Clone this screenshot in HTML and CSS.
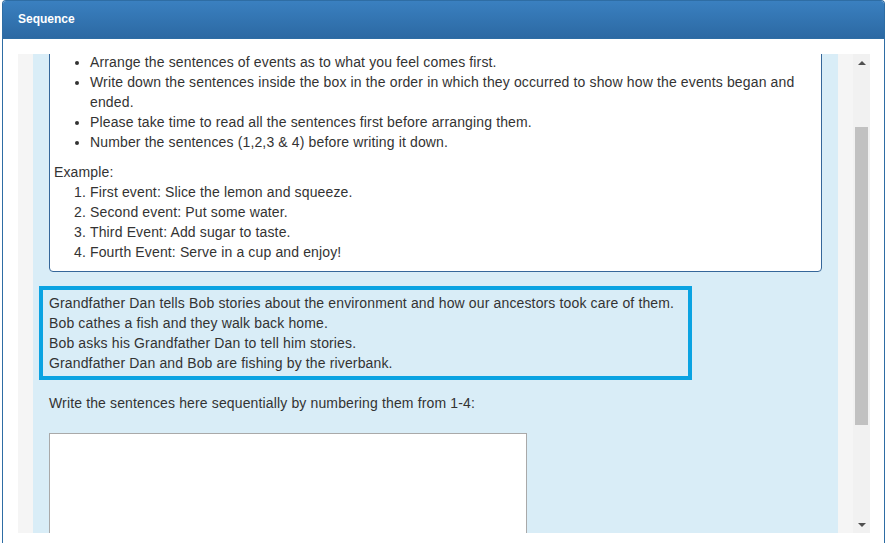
FILE: index.html
```html
<!DOCTYPE html>
<html>
<head>
    <title>Sequence</title>
    <link rel="stylesheet" href="styles.css">
</head>
<body>
    <div class="panel">
        <div class="panel-heading">Sequence</div>
        <div class="panel-body">
            <div class="scroll-frame">
                <div class="scroll-view" id="view">
                    <div class="question">
                        <div class="instructions">
                            <p class="title">Instructions:</p>
                            <p>Read the four sentences in the box below.</p>
                            <ul>
                                <li>Arrange the sentences of events as to what you feel comes first.</li>
                                <li>Write down the sentences inside the box in the order in which they occurred to show how the events began and ended.</li>
                                <li>Please take time to read all the sentences first before arranging them.</li>
                                <li>Number the sentences (1,2,3 &amp; 4) before writing it down.</li>
                            </ul>
                            <div>Example:</div>
                            <ol>
                                <li>First event: Slice the lemon and squeeze.</li>
                                <li>Second event: Put some water.</li>
                                <li>Third Event: Add sugar to taste.</li>
                                <li>Fourth Event: Serve in a cup and enjoy!</li>
                            </ol>
                        </div>
                        <div class="sentences">
                            <div>Grandfather Dan tells Bob stories about the environment and how our ancestors took care of them.</div>
                            <div>Bob cathes a fish and they walk back home.</div>
                            <div>Bob asks his Grandfather Dan to tell him stories.</div>
                            <div>Grandfather Dan and Bob are fishing by the riverbank.</div>
                        </div>
                        <p class="prompt">Write the sentences here sequentially by numbering them from 1-4:</p>
                        <textarea class="answer"></textarea>
                    </div>
                </div>
                <div class="scrollbar">
                    <div class="sb-button"><span class="arrow-up"></span></div>
                    <div class="sb-track"><div class="sb-thumb"></div></div>
                    <div class="sb-button"><span class="arrow-down"></span></div>
                </div>
            </div>
        </div>
    </div>

    <script>
        // page is shown scrolled a bit down
        document.getElementById('view').scrollTop = 90;
    </script>
</body>
</html>
```

FILE: styles.css
```css
body { margin: 0; font-family: "Liberation Sans", Arial, sans-serif; font-size: 14px; line-height: 20px; color: #333; letter-spacing: 0.14px; }
p { margin: 0 0 10px; }

.panel { margin: 0 3px 0 2px; height: 543px; border: 1px solid #2e6da4; border-bottom: none; border-radius: 4px 4px 0 0; box-sizing: border-box; overflow: hidden; }
.panel-heading { height: 37px; line-height: 37px; padding-left: 15px; border-bottom: 1px solid #2e6da4; background: linear-gradient(#3a80c0, #2c69a3); color: #fff; font-size: 12px; font-weight: bold; letter-spacing: 0; }
.panel-body { padding: 15px 14px 0 15px; background: #fff; }

.scroll-frame { display: flex; height: 479px; }
.scroll-view { flex: 1; overflow: hidden; background: #f5f5f5; padding: 0 15px; }
.question { background: #d9edf7; padding: 16px 16px 40px; }

.instructions { background: #fff; border: 1px solid #35679a; border-radius: 4px; padding: 11px 4px 0; }
.instructions .title { font-weight: bold; }
.instructions ul { margin: 0 0 10px; padding-left: 36px; }
.instructions ol { margin: 0 0 9px; padding-left: 36px; }

.sentences { margin: 14px 0 13px -10px; width: 653px; box-sizing: border-box; border: 4px solid #0aa3e2; padding: 3px 6px 3px; }

.prompt { margin-bottom: 20px; }
.answer { display: block; width: 478px; height: 200px; box-sizing: border-box; border: 1px solid #a9a9a9; margin: 0; padding: 4px; resize: none; background: #fff; }

.scrollbar { width: 17px; display: flex; flex-direction: column; background: #f1f1f1; }
.sb-button { height: 17px; display: flex; align-items: center; justify-content: center; }
.sb-track { flex: 1; padding: 0 2px; }
.sb-thumb { margin-top: 56px; height: 298px; background: #c1c1c1; }
.arrow-up { width: 0; height: 0; border-left: 4px solid transparent; border-right: 4px solid transparent; border-bottom: 4px solid #505050; }
.arrow-down { width: 0; height: 0; border-left: 4px solid transparent; border-right: 4px solid transparent; border-top: 4px solid #505050; }
```
